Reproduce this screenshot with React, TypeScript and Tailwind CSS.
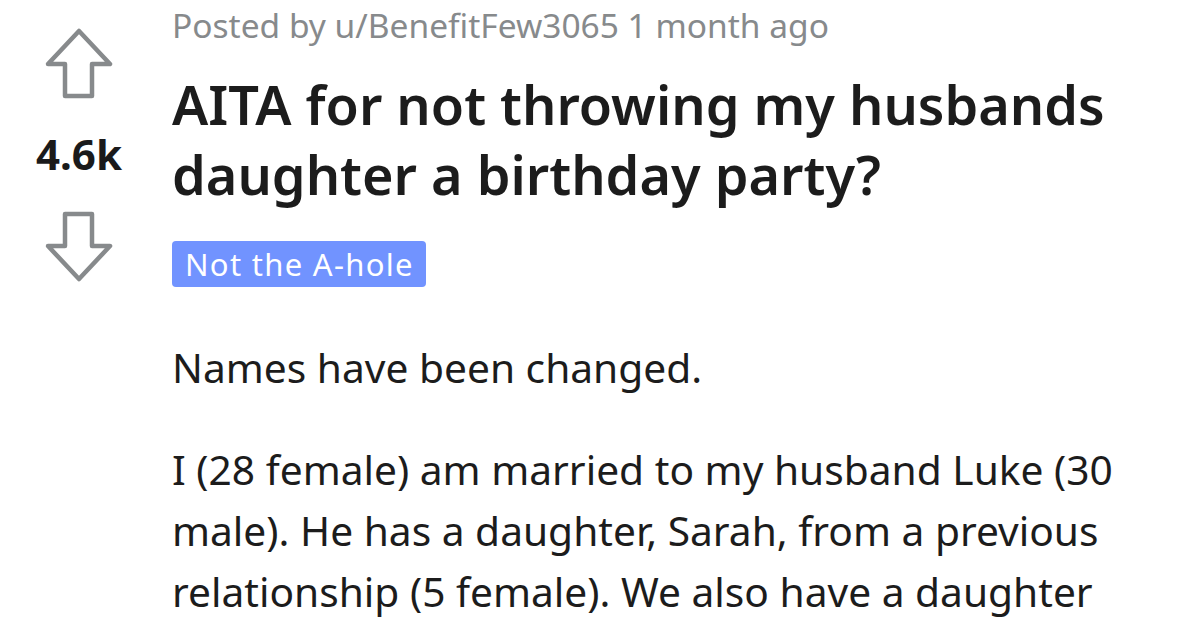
import React from "react";

function UpArrow() {
  return (
    <svg width="70" height="72" viewBox="0 0 70 72" fill="none">
      <path
        d="M35 3 L66 36 L48 36 L48 68 L21 68 L21 36 L4 36 Z"
        stroke="#878a8c"
        strokeWidth="4.5"
        strokeLinejoin="round"
      />
    </svg>
  );
}

function DownArrow() {
  return (
    <svg width="70" height="72" viewBox="0 0 70 72" fill="none">
      <path
        d="M35 69 L66 36 L48 36 L48 4 L21 4 L21 36 L4 36 Z"
        stroke="#878a8c"
        strokeWidth="4.5"
        strokeLinejoin="round"
      />
    </svg>
  );
}

export default function App() {
  return (
    <div className="w-[1200px] h-[628px] bg-white overflow-hidden flex">
      <div className="w-[160px] flex flex-col items-center pt-[28px] pr-[2px]">
        <UpArrow />
        <div
          className="mt-[32px] text-[42px] leading-[44px] font-bold text-[#1a1a1b]"
          style={{ fontFamily: '"Noto Sans", sans-serif' }}
        >
          4.6k
        </div>
        <div className="mt-[34px]">
          <DownArrow />
        </div>
      </div>
      <div className="flex-1 pl-[12px] pt-[3px]">
        <div
          className="text-[33.5px] leading-[44px] text-[#878a8c]"
          style={{ fontFamily: '"Noto Sans", sans-serif' }}
        >
          Posted by u/BenefitFew3065 1 month ago
        </div>
        <div
          className="mt-[22px] text-[54px] leading-[70px] font-semibold text-[#1c1c1c] w-[1000px]"
          style={{ fontFamily: '"Noto Sans", sans-serif' }}
        >
          AITA for not throwing my husbands daughter a birthday party?
        </div>
        <div className="mt-[32px] flex">
          <span
            className="bg-[#7193ff] text-white text-[31px] leading-[46px] tracking-[1.3px] pl-[13px] pr-[12px] rounded-[4px]"
            style={{ fontFamily: '"Noto Sans", sans-serif' }}
          >
            Not the A-hole
          </span>
        </div>
        <div
          className="mt-[50px] text-[40.7px] leading-[61px] text-[#1c1c1c] w-[955px]"
          style={{ fontFamily: '"Noto Sans", sans-serif' }}
        >
          <p>Names have been changed.</p>
          <p className="mt-[41px]">
            I (28 female) am married to my husband Luke (30 male). He has a daughter, Sarah, from a previous relationship (5 female). We also have a daughter
          </p>
        </div>
      </div>
    </div>
  );
}
